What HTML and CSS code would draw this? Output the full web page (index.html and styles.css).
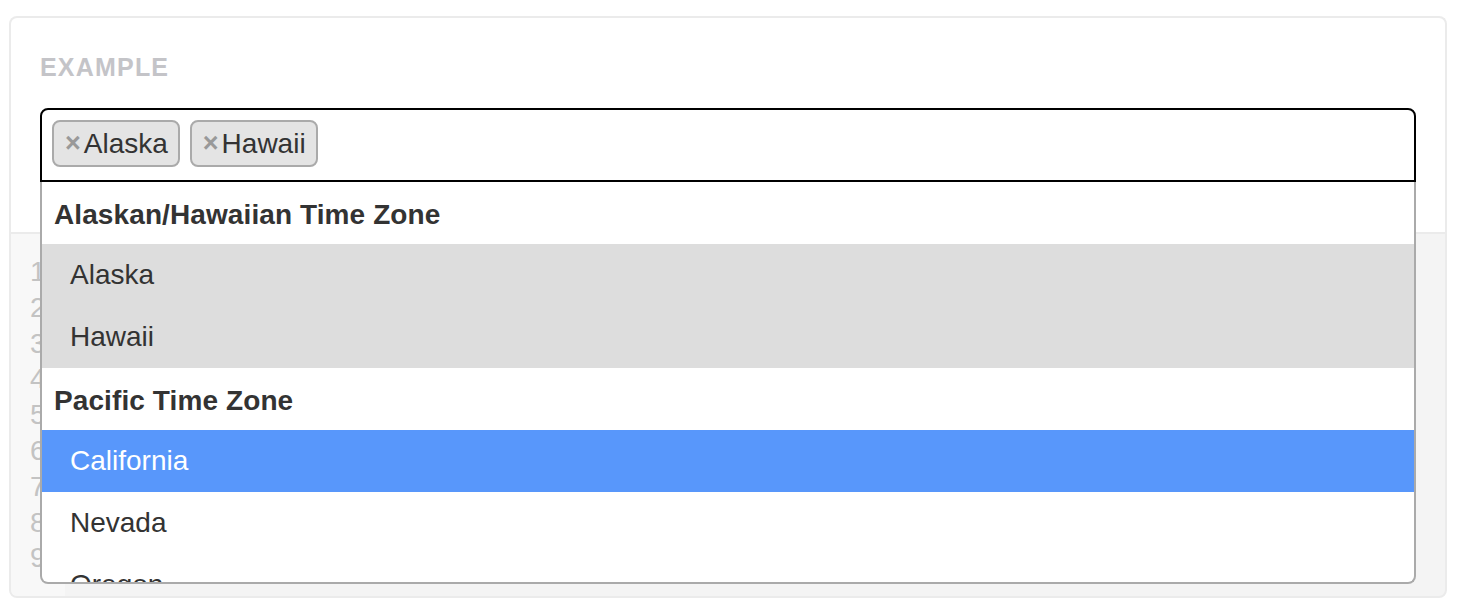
FILE: index.html
```html
<!DOCTYPE html>
<html lang="en">
<head>
<meta charset="utf-8">
<title>Select2 example</title>
<link rel="stylesheet" href="styles.css">
</head>
<body>
<div class="demo">
  <div class="example">
    <div class="label">EXAMPLE</div>
    <div class="select">
      <div class="selection">
        <span class="chip"><span class="chip-x">×</span>Alaska</span>
        <span class="chip"><span class="chip-x">×</span>Hawaii</span>
      </div>
      <div class="dropdown">
        <ul class="results">
          <li class="group">Alaskan/Hawaiian Time Zone</li>
          <li class="option selected">Alaska</li>
          <li class="option selected">Hawaii</li>
          <li class="group">Pacific Time Zone</li>
          <li class="option highlighted">California</li>
          <li class="option">Nevada</li>
          <li class="option">Oregon</li>
          <li class="option">Washington</li>
        </ul>
      </div>
    </div>
  </div>
  <div class="code">
    <div class="gutter">
      <div>1</div><div>2</div><div>3</div><div>4</div><div>5</div><div>6</div><div>7</div><div>8</div><div>9</div>
    </div>
    <div class="code-body"></div>
  </div>
</div>
</body>
</html>
```
FILE: styles.css
```css
html, body {
  margin: 0;
  padding: 0;
  background: #ffffff;
}

body {
  font-family: "Liberation Sans", Arial, Helvetica, sans-serif;
  color: #333333;
}

.demo {
  margin: 16px 0 0 9px;
  width: 1438px;
}

.example {
  border: 2px solid #ebebeb;
  border-bottom: none;
  border-radius: 8px 8px 0 0;
  padding: 34px 29px 50px 29px;
  background: #ffffff;
}

.label {
  font-size: 25px;
  line-height: 30px;
  font-weight: bold;
  letter-spacing: 1.2px;
  color: #c4c4c8;
}

.select {
  position: relative;
  margin-top: 26px;
  width: 1376px;
}

.selection {
  box-sizing: border-box;
  height: 74px;
  border: 2px solid #000000;
  border-radius: 8px 8px 0 0;
  padding: 10px 10px 0 10px;
  display: flex;
  gap: 10px;
  align-items: flex-start;
  background: #ffffff;
}

.chip {
  box-sizing: border-box;
  height: 47px;
  border: 2px solid #aaaaaa;
  border-radius: 8px;
  background: #e4e4e4;
  padding: 0 10px 0 11px;
  font-size: 28px;
  line-height: 43px;
  color: #333333;
  display: flex;
  align-items: center;
}

.chip-x {
  font-size: 27px;
  font-weight: bold;
  color: #999999;
  margin-right: 3px;
  line-height: 43px;
}

.dropdown {
  position: absolute;
  top: 74px;
  left: 0;
  right: 0;
  box-sizing: border-box;
  height: 402px;
  border: 2px solid #aaaaaa;
  border-top: none;
  border-radius: 0 0 8px 8px;
  background: #ffffff;
  overflow: hidden;
  z-index: 2;
}

.results {
  list-style: none;
  margin: 0;
  padding: 0;
}

.results li {
  box-sizing: border-box;
  height: 62px;
  font-size: 28px;
  line-height: 62px;
  color: #333333;
}

.results li.group {
  font-weight: bold;
  padding-left: 12px;
  padding-top: 4px;
  line-height: 58px;
  letter-spacing: 0.1px;
}

.option {
  padding-left: 28px;
}

.option.selected {
  background: #dddddd;
}

.results li.highlighted {
  background: #5897fb;
  color: #ffffff;
}

.code {
  box-sizing: border-box;
  height: 366px;
  border: 2px solid #ebebeb;
  border-radius: 0 0 8px 8px;
  background: #f4f4f4;
  display: flex;
  overflow: hidden;
}

.gutter {
  width: 54px;
  background: #f8f8f8;
  padding-top: 20px;
  padding-left: 19px;
  box-sizing: border-box;
  font-family: "Liberation Sans", Arial, sans-serif;
  font-size: 28px;
  line-height: 35.8px;
  color: #c3c3c3;
}

.code-body {
  flex: 1;
}
```
